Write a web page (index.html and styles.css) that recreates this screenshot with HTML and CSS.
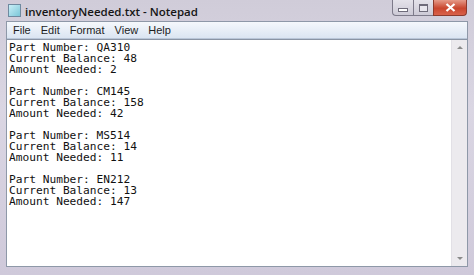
FILE: index.html
```html
<!DOCTYPE html>
<html lang="en">
<head>
    <meta charset="UTF-8">
    <title>inventoryNeeded.txt - Notepad</title>
    <link rel="stylesheet" href="styles.css">
</head>
<body>
    <div class="window">
        <div class="titlebar">
            <div class="app-icon"></div>
            <div class="title">inventoryNeeded.txt - Notepad</div>
            <div class="buttons">
                <div class="btn min"><span></span></div>
                <div class="btn max"><span></span></div>
                <div class="btn close">
                    <svg width="11" height="9" viewBox="0 0 11 9">
                        <path d="M1.5 1 L9.5 8 M9.5 1 L1.5 8" stroke="#fff" stroke-width="2.2"/>
                    </svg>
                </div>
            </div>
        </div>
        <div class="client">
            <div class="menubar">
                <span>File</span>
                <span>Edit</span>
                <span>Format</span>
                <span>View</span>
                <span>Help</span>
            </div>
            <div class="editor">
                <pre class="text">Part Number: QA310
Current Balance: 48
Amount Needed: 2

Part Number: CM145
Current Balance: 158
Amount Needed: 42

Part Number: MS514
Current Balance: 14
Amount Needed: 11

Part Number: EN212
Current Balance: 13
Amount Needed: 147</pre>
                <div class="scrollbar">
                    <div class="arrow up"></div>
                    <div class="arrow down"></div>
                </div>
            </div>
        </div>
    </div>
</body>
</html>
```

FILE: styles.css
```css
body {
    margin: 0;
    background: #d6d2df;
}
.window {
    width: 474px;
    height: 275px;
    box-sizing: border-box;
    background: linear-gradient(#d0ccd9, #dad6e3 40%, #cfc9da);
    padding: 0 6px 8px 6px;
    display: flex;
    flex-direction: column;
}
.titlebar {
    height: 21px;
    display: flex;
    align-items: center;
}
.app-icon {
    width: 11px;
    height: 11px;
    margin-left: 2px;
    border: 1px solid #6f8aa0;
    background: linear-gradient(135deg, #c8eef7, #7cc7d8);
}
.title {
    margin-left: 4px;
    font-family: "Open Sans", "Liberation Sans", sans-serif;
    font-size: 11.5px;
    font-weight: 600;
    color: #151515;
    padding-top: 1px;
}
.buttons {
    margin-left: auto;
    align-self: flex-start;
    display: flex;
    margin-right: 1px;
}
.btn {
    height: 15px;
    border: 1px solid #7d7a8a;
    border-top: none;
    display: flex;
    align-items: center;
    justify-content: center;
    background: linear-gradient(#e4e2ea, #cdcad6);
}
.min {
    width: 20px;
    border-radius: 0 0 0 4px;
    border-right: none;
}
.min span {
    width: 8px;
    height: 2px;
    background: #fff;
    border: 1px solid #6e6b7a;
    margin-top: 5px;
}
.max {
    width: 19px;
    border-right: none;
}
.max span {
    width: 7px;
    height: 5px;
    border: 1px solid #6e6b7a;
    border-top-width: 2px;
    background: #e8e6ee;
}
.close {
    width: 32px;
    border-radius: 0 0 4px 0;
    border-color: #8d3a2c;
    background: linear-gradient(#e59a88, #c9462e 55%, #d9614a);
}
.client {
    flex: 1;
    display: flex;
    flex-direction: column;
    border: 1px solid #8e98a8;
}
.menubar {
    height: 16px;
    background: linear-gradient(#f5f8fc, #dbe5f2);
    border-bottom: 1px solid #b9c6d8;
    display: flex;
    align-items: center;
    font-family: "Liberation Sans", Arial, sans-serif;
    font-size: 11px;
    color: #1e1e1e;
    padding-left: 6px;
}
.menubar span {
    margin-right: 10px;
}
.editor {
    flex: 1;
    display: flex;
    background: #fff;
    border-top: 1px solid #8a94a4;
}
.text {
    flex: 1;
    margin: 0;
    padding: 2px 0 0 2px;
    font-family: "DejaVu Sans Mono", "Liberation Mono", monospace;
    font-size: 11.2px;
    line-height: 11px;
    color: #111;
}
.scrollbar {
    width: 15px;
    background: #eceaee;
    border-left: 1px solid #e2e0e6;
    display: flex;
    flex-direction: column;
    justify-content: space-between;
    padding: 6px 0;
    align-items: center;
}
.arrow {
    width: 0;
    height: 0;
    border-left: 3px solid transparent;
    border-right: 3px solid transparent;
}
.up {
    border-bottom: 3px solid #8a8a8a;
}
.down {
    border-top: 3px solid #8a8a8a;
}
```
